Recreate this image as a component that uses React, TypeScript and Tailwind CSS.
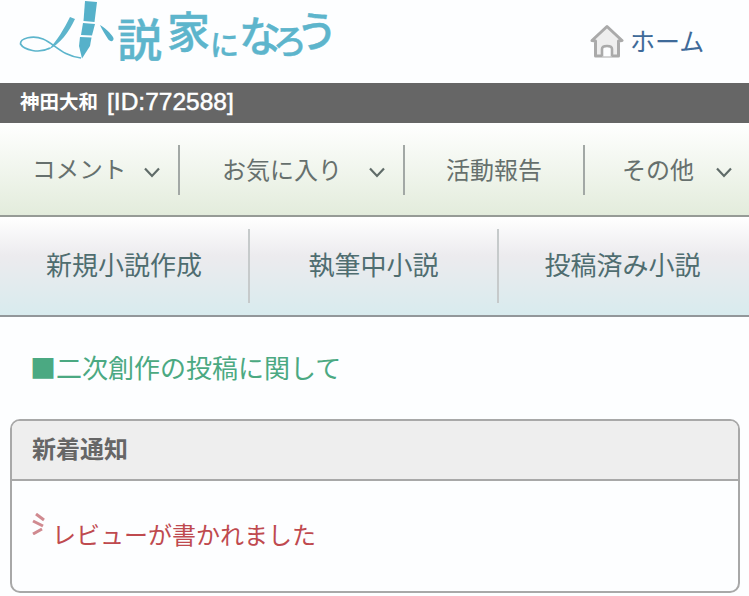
import React from 'react';

const jp = 'font-["Liberation_Sans","Noto_Sans_CJK_JP",sans-serif]';

const Chevron = () => (
  <svg width="18" height="12" viewBox="0 0 18 12" fill="none" stroke="#5f6b68" strokeWidth="2.2" className="shrink-0">
    <path d="M2 2.5 L9 10 L16 2.5" />
  </svg>
);

// ペン先とはらいのロゴ部分
const LogoPen = () => (
  <svg width="98" height="64" viewBox="0 0 98 64" className="shrink-0">
    <path d="M31 48 C20 54 5 50 1.5 44 C1 38 14 35 24 39 C36 44 43 56 62 58" fill="none" stroke="#5db5cc" strokeWidth="1.7" />
    <path d="M51 17 L56 19 C50 32 41 44 29 50 C38 41 45 29 51 17 Z" fill="#5db5cc" />
    <path d="M66 1 L78 2 L75.5 22 L64.5 21 Z" fill="#56b1ca" />
    <path d="M64 23 L76 24 L73 35.5 L62 35 Z" fill="#56b1ca" />
    <path d="M61 37 L72.5 37.5 L71 46 L63 58.5 L60 46 Z" fill="#56b1ca" />
    <path d="M81 25 C85 27 92 33 94.5 38 C95 42 91 42 89 39 C86 34 83 30 81 25 Z" fill="#56b1ca" />
  </svg>
);

const HomeIcon = () => (
  <svg width="34" height="34" viewBox="0 0 34 34" className="shrink-0">
    <path d="M2 16.5 L17 2.5 L32 16.5 L28.5 17 L28.5 32 L5.5 32 L5.5 17 Z" fill="#eeeeee" stroke="#aaaaaa" strokeWidth="3" strokeLinejoin="round" />
    <path d="M12 32.5 L12 25 C12 21 22 21 22 25 L22 32.5" fill="#fdfeff" stroke="#aaaaaa" strokeWidth="2.6" />
  </svg>
);

const Sparkle = () => (
  <svg width="14" height="22" viewBox="0 0 14 22" className="shrink-0" fill="none" stroke="#d08a90" strokeWidth="3">
    <path d="M4 1 L12 7" />
    <path d="M1 8 L11 13" />
    <path d="M1 21 L10 16" />
  </svg>
);

const App = () => {
  return (
    <div className={`h-[596px] w-[749px] overflow-hidden bg-[#fdfeff] ${jp}`}>
      {/* ヘッダー */}
      <div className="flex h-[83px] items-start">
        <div className="ml-[19px] flex h-[64px] w-[400px] items-start">
          <LogoPen />
          <div className="flex items-start font-['Noto_Sans_CJK_JP'] font-medium leading-none text-[#5db5cc] [-webkit-text-stroke:0.4px_#5db5cc]">
            <span className="mt-[15px] text-[45px]">説</span>
            <span className="ml-[5px] mt-[8px] text-[43px]">家</span>
            <span className="mt-[29px] text-[29px]">に</span>
            <span className="mt-[13px] text-[42px]">な</span>
            <span className="-ml-[8px] mt-[23px] text-[34px]">ろ</span>
            <span className="-ml-[11px] mt-[8px] text-[42px]">う</span>
          </div>
        </div>
        <div className="ml-[171px] mt-[23px] flex items-center gap-[6px]">
          <HomeIcon />
          <span className="mt-[2px] text-[25px] leading-[34px] text-[#3f6a99]">ホーム</span>
        </div>
      </div>

      {/* ユーザー名 */}
      <div className="flex h-[40px] items-center bg-[#666666] pb-[1px] pl-[20px] text-white">
        <span className="text-[19.5px] font-bold">神田大和</span>
        <span className="ml-[9px] text-[24.5px] [-webkit-text-stroke:0.5px_white]">[ID:772588]</span>
      </div>

      {/* メニュー1 */}
      <div className="flex h-[94px] items-center border-b-2 border-[#969b96] bg-gradient-to-b from-[#ffffff] to-[#e3ecdc] pt-[2px] text-[24px] text-[#66706d]">
        <div className="flex h-[50px] w-[180px] items-center border-r-2 border-[#a2a8a5] pl-[32px]">
          <span className="mt-[1px] text-[23.6px]">コメント</span>
          <span className="ml-[17px] mt-[3px]"><Chevron /></span>
        </div>
        <div className="flex h-[50px] w-[225px] items-center border-r-2 border-[#a2a8a5] pl-[42px]">
          <span className="mt-[1px]">お気に入り</span>
          <span className="ml-[26px] mt-[3px]"><Chevron /></span>
        </div>
        <div className="flex h-[50px] w-[180px] items-center justify-center border-r-2 border-[#a2a8a5]">
          <span className="mt-[1px]">活動報告</span>
        </div>
        <div className="flex h-[50px] flex-1 items-center pl-[37px]">
          <span className="mt-[1px]">その他</span>
          <span className="ml-[21px] mt-[3px]"><Chevron /></span>
        </div>
      </div>

      {/* メニュー2 */}
      <div className="flex h-[100px] items-center border-b-2 border-[#92979a] bg-gradient-to-b from-[#ffffff] via-[#ecebee] via-40% to-[#d8ebee] pb-[1px] text-[26px] text-[#4f6d70]">
        <div className="flex h-[74px] w-[250px] items-center justify-center border-r-2 border-[#c6cacb] pt-[2px]">新規小説作成</div>
        <div className="flex h-[74px] w-[249px] items-center justify-center border-r-2 border-[#c6cacb] pt-[2px]">執筆中小説</div>
        <div className="flex h-[74px] flex-1 items-center justify-center pr-[3px] pt-[2px]">投稿済み小説</div>
      </div>

      {/* 案内リンク */}
      <div className="flex h-[102px] items-center pb-[4px] pl-[30px] font-['Noto_Sans_CJK_JP'] text-[26px] text-[#4ba982]">
        ■二次創作の投稿に関して
      </div>

      {/* 新着通知 */}
      <div className="ml-[10px] mr-[9px] h-[174px] overflow-hidden rounded-[10px] border-2 border-[#a8a8a8]">
        <div className="flex h-[60px] items-center border-b-2 border-[#a8a8a8] bg-[#eeeeee] pl-[20px] text-[24px] font-bold text-[#666666]">
          新着通知
        </div>
        <div className="flex items-start pl-[20px] pt-[32px]">
          <Sparkle />
          <span className="ml-[6px] mt-[6px] text-[24px] leading-[34px] text-[#bf4a4f]">レビューが書かれました</span>
        </div>
      </div>
    </div>
  );
};

export default App;
